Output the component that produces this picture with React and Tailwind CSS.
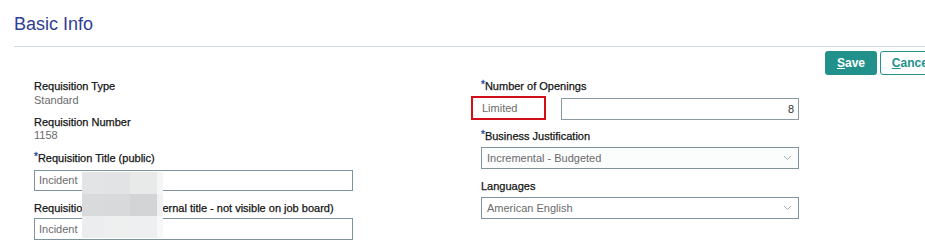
import React from "react";

const font = { fontFamily: '"Liberation Sans", Arial, sans-serif' };

function Label({ children, required }) {
  return (
    <div className="text-[11px] leading-[14px] text-[#141414] [-webkit-text-stroke:0.25px_#141414] whitespace-nowrap">
      {required && <span className="text-[#1d4f9e] text-[10px] relative -top-[2px] [-webkit-text-stroke:0.3px_#1d4f9e]">*</span>}
      {children}
    </div>
  );
}

function Chevron() {
  return (
    <svg width="9" height="6" viewBox="0 0 9 6" className="mr-[6px]">
      <path d="M1 1l3.5 3.5L8 1" fill="none" stroke="#a3adb4" strokeWidth="1" />
    </svg>
  );
}

function Blur() {
  const rows = [
    ["#e3e4e5", "#e2e3e4", "#e8e9e9", "#f4f5f5"],
    ["#d9dadb", "#d8d9da", "#d3d4d5", "#f1f1f1"],
    ["#ecedee", "#eef0f0", "#eeeff0", "#f8f8f8"],
  ];
  return (
    <div className="absolute left-[82px] top-[172px] flex flex-col">
      {rows.map((r, i) => (
        <div key={i} className="flex h-[22px]">
          <div className="w-[22px]" style={{ background: r[0] }} />
          <div className="w-[26px]" style={{ background: r[1] }} />
          <div className="w-[27px]" style={{ background: r[2] }} />
          <div className="w-[6px]" style={{ background: r[3] }} />
        </div>
      ))}
    </div>
  );
}

export default function App() {
  return (
    <div className="relative w-[925px] h-[248px] overflow-hidden bg-white" style={font}>
      <div className="ml-[14px] h-[47px] border-b border-[#d3dae1] pt-[13px]">
        <h1 className="text-[18px] leading-[22px] text-[#2f3e91]">Basic Info</h1>
      </div>

      <div className="flex justify-end gap-[3px] mt-[4px] -mr-[18px]">
        <button className="w-[52px] h-[24px] rounded-[3px] bg-[#23918b] text-white text-[12px] font-bold">
          <span className="underline">S</span>ave
        </button>
        <button className="w-[63px] h-[24px] rounded-[3px] border border-[#23918b] bg-white text-[#23918b] text-[12px] font-bold">
          <span className="underline">C</span>ancel
        </button>
      </div>

      <div className="flex mt-[4px]">
        <div className="ml-[34px] w-[319px] flex flex-col">
          <Label>Requisition Type</Label>
          <div className="text-[11px] leading-[14px] text-[#6b6b6b]">Standard</div>
          <div className="mt-[8px]">
            <Label>Requisition Number</Label>
          </div>
          <div className="text-[11px] leading-[12px] text-[#6b6b6b]">1158</div>
          <div className="mt-[10px]">
            <Label required>Requisition Title (public)</Label>
          </div>
          <div className="mt-[4px] h-[21px] border border-[#7f939e] flex items-center px-[4px] text-[11px] text-[#6b6b6b]">
            Incident
          </div>
          <div className="mt-[10px]">
            <Label>Requisition Title Name (internal title - not visible on job board)</Label>
          </div>
          <div className="mt-[3px] h-[22px] border border-[#7f939e] flex items-center px-[4px] text-[11px] text-[#6b6b6b]">
            Incident
          </div>
        </div>

        <div className="ml-[118px] w-[330px] flex flex-col">
          <div className="pl-[10px]">
            <Label required>Number of Openings</Label>
          </div>
          <div className="flex items-end mt-[2px]">
            <div className="w-[75px] h-[24px] border-2 border-[#d20f16] flex items-center pl-[9px] text-[11px] text-[#6b6b6b]">
              Limited
            </div>
            <div className="ml-[15px] w-[238px] h-[22px] border border-[#8a9aa4] flex items-center justify-end pr-[4px] text-[11px] text-[#333]">
              8
            </div>
          </div>
          <div className="pl-[10px] mt-[9px]">
            <Label required>Business Justification</Label>
          </div>
          <div className="ml-[10px] mt-[3px] w-[318px] h-[22px] border border-[#7f939e] bg-[#fbfcfc] flex items-center justify-between pl-[5px] text-[11px] text-[#6b6b6b]">
            Incremental - Budgeted
            <Chevron />
          </div>
          <div className="pl-[10px] mt-[10px]">
            <Label>Languages</Label>
          </div>
          <div className="ml-[10px] mt-[4px] w-[318px] h-[22px] border border-[#7f939e] flex items-center justify-between pl-[5px] text-[11px] text-[#6b6b6b]">
            American English
            <Chevron />
          </div>
        </div>
      </div>

      <Blur />
    </div>
  );
}
